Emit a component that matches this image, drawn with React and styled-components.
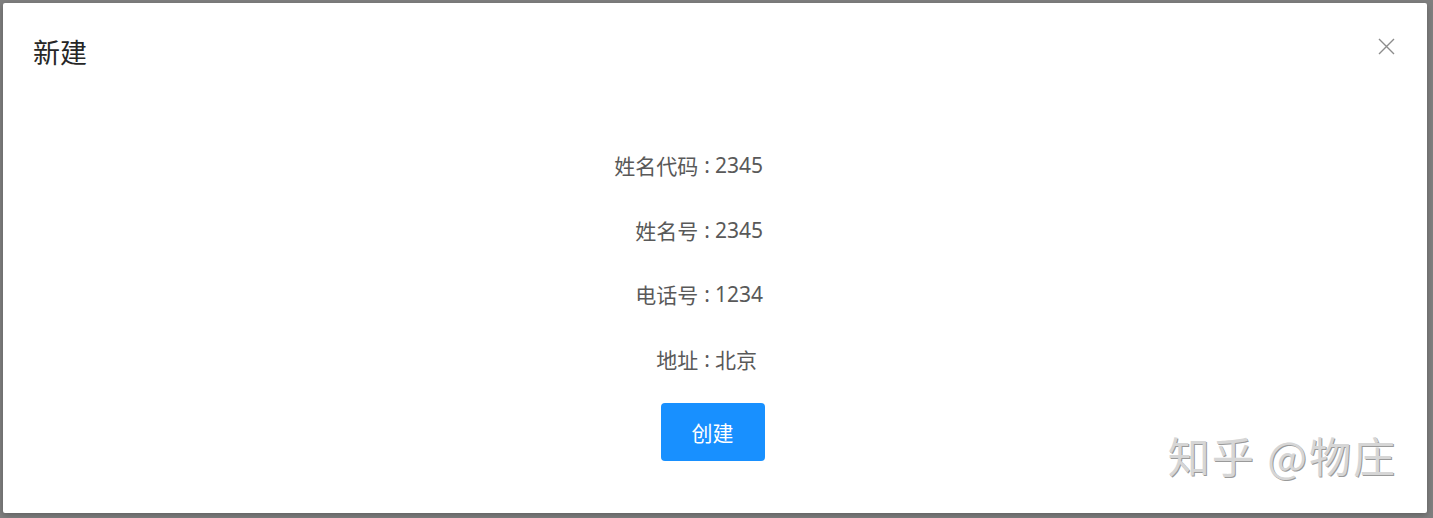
import React from "react";
import styled, { createGlobalStyle } from "styled-components";

const GlobalStyle = createGlobalStyle`
  html, body {
    margin: 0;
    padding: 0;
    background: #7f7f7f;
  }
  body {
    font-family: "Noto Sans", "Noto Sans CJK SC", sans-serif;
  }
`;

const fields = [
  { label: "姓名代码", value: "2345" },
  { label: "姓名号", value: "2345" },
  { label: "电话号", value: "1234" },
  { label: "地址", value: "北京" },
];

const CloseIcon = () => (
  <svg width="17" height="17" viewBox="0 0 17 17">
    <path d="M1 1 L16 16 M16 1 L1 16" stroke="#8c8c8c" strokeWidth="1.4" fill="none" />
  </svg>
);

const App = () => {
  return (
    <>
      <GlobalStyle />
      <Mask>
        <Modal>
          <Header>
            <Title>新建</Title>
            <CloseButton aria-label="关闭">
              <CloseIcon />
            </CloseButton>
          </Header>
          <Body>
            <Form>
              {fields.map((f) => (
                <FormRow key={f.label}>
                  <Label>
                    {f.label}
                    <Colon>:</Colon>
                  </Label>
                  <Value>{f.value}</Value>
                </FormRow>
              ))}
              <SubmitButton>创建</SubmitButton>
            </Form>
          </Body>
          <Watermark>知乎 @物庄</Watermark>
        </Modal>
      </Mask>
    </>
  );
};

export default App;

const Mask = styled.div`
  width: 1433px;
  height: 518px;
  box-sizing: border-box;
  padding: 3px 6px 5px 3px;
  display: flex;
  background: #7f7f7f;
`;

const Modal = styled.div`
  position: relative;
  flex: 1;
  display: flex;
  flex-direction: column;
  background: #fff;
  border-radius: 2px;
  box-shadow: 0 2px 6px rgba(0, 0, 0, 0.25);
  overflow: hidden;
`;

const Header = styled.div`
  display: flex;
  align-items: center;
  justify-content: space-between;
  height: 100px;
  padding: 0 32px 0 30px;
  box-sizing: border-box;
  margin-top: -4px;
`;

const Title = styled.div`
  font-size: 27px;
  color: #262626;
  line-height: 1;
  margin-top: 6px;
`;

const CloseButton = styled.button`
  border: none;
  background: transparent;
  padding: 0;
  cursor: pointer;
  display: flex;
  margin-top: -6px;
`;

const Body = styled.div`
  flex: 1;
  padding: 46px 0 0;
`;

const Form = styled.div`
  display: grid;
  grid-template-columns: 1fr 1fr;
  grid-auto-rows: 40px;
  row-gap: 24.6px;
`;

const FormRow = styled.div`
  display: contents;
`;

const Label = styled.div`
  display: flex;
  align-items: center;
  justify-content: flex-end;
  font-size: 21px;
  color: #595959;
`;

const Colon = styled.span`
  margin: 0 5px 0 6px;
`;

const Value = styled.div`
  display: flex;
  align-items: center;
  font-size: 21px;
  color: #595959;
`;

const SubmitButton = styled.button`
  grid-column: 1 / -1;
  justify-self: center;
  width: 104px;
  height: 58px;
  margin-right: 5px;
  margin-top: 0;
  border: none;
  border-radius: 4px;
  background: #1890ff;
  color: #fff;
  font-family: "Noto Sans CJK SC", sans-serif;
  font-size: 21px;
  cursor: pointer;
`;

const Watermark = styled.div`
  position: absolute;
  right: 30px;
  bottom: 28px;
  font-family: "Noto Sans CJK SC", sans-serif;
  font-size: 42px;
  letter-spacing: 2px;
  color: #d6d6d6;
  text-shadow: 1px 1px 0 #9a9a9a;
  pointer-events: none;
`;
